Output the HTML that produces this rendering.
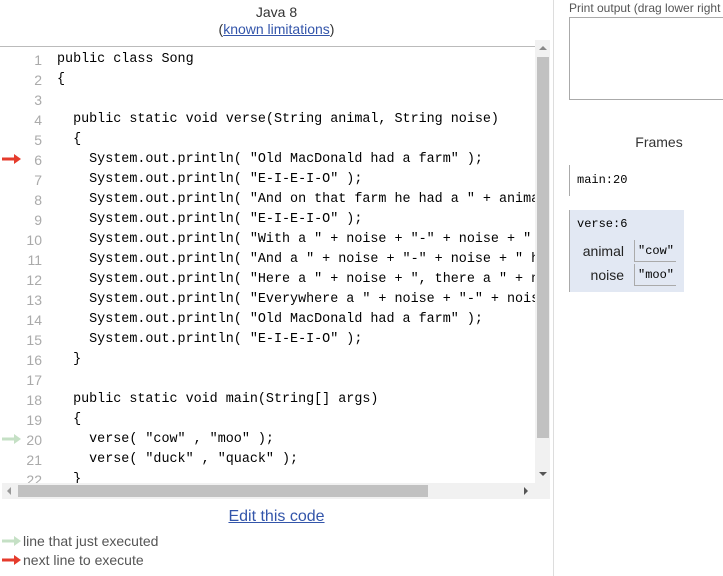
<!DOCTYPE html>
<html><head><meta charset="utf-8"><style>
body{margin:0;width:723px;height:576px;overflow:hidden;background:#fff;font-family:"Liberation Sans",sans-serif;position:relative}
.a{position:absolute}
.code{font-family:"Liberation Mono",monospace;font-size:13.4px;white-space:pre;color:#000}
.ln{position:absolute;left:0;width:42px;text-align:right;font-family:"Liberation Sans",sans-serif;font-size:14px;color:#aaa}
.cl{position:absolute;left:57px;height:20px;line-height:20px}
</style></head><body>
<div class="a" style="left:0;width:553px;top:4px;text-align:center;font-size:14px;color:#333;line-height:17px">Java 8<br>(<span style="color:#3355aa;text-decoration:underline">known limitations</span>)</div>
<div class="a" style="left:0;top:46px;width:536px;height:1px;background:#bbb"></div>
<div class="a" style="left:553px;top:0;width:1px;height:576px;background:#ddd"></div>
<div class="a code" style="left:0;top:47px;width:536px;height:436px;overflow:hidden">
<div class="ln" style="top:3px;line-height:20px">1<br>2<br>3<br>4<br>5<br>6<br>7<br>8<br>9<br>10<br>11<br>12<br>13<br>14<br>15<br>16<br>17<br>18<br>19<br>20<br>21<br>22</div>
<div class="cl" style="top:3px;line-height:20px">public class Song
{

  public static void verse(String animal, String noise)
  {
    System.out.println( "Old MacDonald had a farm" );
    System.out.println( "E-I-E-I-O" );
    System.out.println( "And on that farm he had a " + animal );
    System.out.println( "E-I-E-I-O" );
    System.out.println( "With a " + noise + "-" + noise + " there" );
    System.out.println( "And a " + noise + "-" + noise + " here" );
    System.out.println( "Here a " + noise + ", there a " + noise );
    System.out.println( "Everywhere a " + noise + "-" + noise );
    System.out.println( "Old MacDonald had a farm" );
    System.out.println( "E-I-E-I-O" );
  }

  public static void main(String[] args)
  {
    verse( "cow" , "moo" );
    verse( "duck" , "quack" );
  }</div>
<svg class="a" style="left:2px;top:106px" width="20" height="12"><path d="M0 4.5H12V1L19 6 12 11V7.5H0Z" fill="#e53b2c"/></svg>
<svg class="a" style="left:2px;top:386px" width="20" height="12"><path d="M0 4.5H12V1L19 6 12 11V7.5H0Z" fill="#c5e0c5"/></svg>
</div>
<div class="a" style="left:535px;top:40px;width:15px;height:443px;background:#f1f1f1"></div>
<div class="a" style="left:537px;top:57px;width:12px;height:381px;background:#c1c1c1"></div>
<div class="a" style="left:539px;top:46px;width:0;height:0;border:4px solid transparent;border-bottom:4px solid #888;border-top:0"></div>
<div class="a" style="left:539px;top:472px;width:0;height:0;border:4px solid transparent;border-top:4px solid #555;border-bottom:0"></div>
<div class="a" style="left:2px;top:483px;width:548px;height:16px;background:#f1f1f1"></div>
<div class="a" style="left:18px;top:485px;width:410px;height:12px;background:#c1c1c1"></div>
<div class="a" style="left:7px;top:487px;border:4px solid transparent;border-right:4px solid #999;border-left:0"></div>
<div class="a" style="left:524px;top:487px;border:4px solid transparent;border-left:4px solid #555;border-right:0"></div>
<div class="a" style="left:0;width:553px;top:508px;text-align:center;font-size:16px;color:#3355aa;text-decoration:underline">Edit this code</div>
<svg class="a" style="left:2px;top:535px" width="20" height="12"><path d="M0 4.5H12V1L19 6 12 11V7.5H0Z" fill="#c5e0c5"/></svg>
<div class="a" style="left:23px;top:533px;font-size:14px;color:#555">line that just executed</div>
<svg class="a" style="left:2px;top:554px" width="20" height="12"><path d="M0 4.5H12V1L19 6 12 11V7.5H0Z" fill="#e53b2c"/></svg>
<div class="a" style="left:23px;top:552px;font-size:14px;color:#555">next line to execute</div>
<div class="a" style="left:569px;top:1px;font-size:12px;color:#555;white-space:nowrap">Print output (drag lower right</div>
<div class="a" style="left:569px;top:17px;width:160px;height:83px;border:1px solid #aaa;box-sizing:border-box"></div>
<div class="a" style="left:569px;width:180px;top:134px;text-align:center;font-size:14px;color:#333">Frames</div>
<div class="a" style="left:569px;top:165px;width:1px;height:31px;background:#aaa"></div>
<div class="a code" style="left:577px;top:173px;font-size:12px">main:20</div>
<div class="a" style="left:569px;top:210px;width:115px;height:82px;background:#e2e8f3;border-left:1px solid #aaa;box-sizing:border-box"></div>
<div class="a code" style="left:577px;top:217px;font-size:12px">verse:6</div>
<div class="a" style="left:570px;top:243px;width:54px;text-align:right;font-size:14px;color:#222">animal</div>
<div class="a" style="left:570px;top:267px;width:54px;text-align:right;font-size:14px;color:#222">noise</div>
<div class="a code" style="left:634px;top:240px;width:42px;height:22px;border-left:1px solid #aaa;border-bottom:1px solid #aaa;font-size:12px;line-height:22px;padding-left:3px;box-sizing:border-box">"cow"</div>
<div class="a code" style="left:634px;top:264px;width:42px;height:22px;border-left:1px solid #aaa;border-bottom:1px solid #aaa;font-size:12px;line-height:22px;padding-left:3px;box-sizing:border-box">"moo"</div>
</body></html>
